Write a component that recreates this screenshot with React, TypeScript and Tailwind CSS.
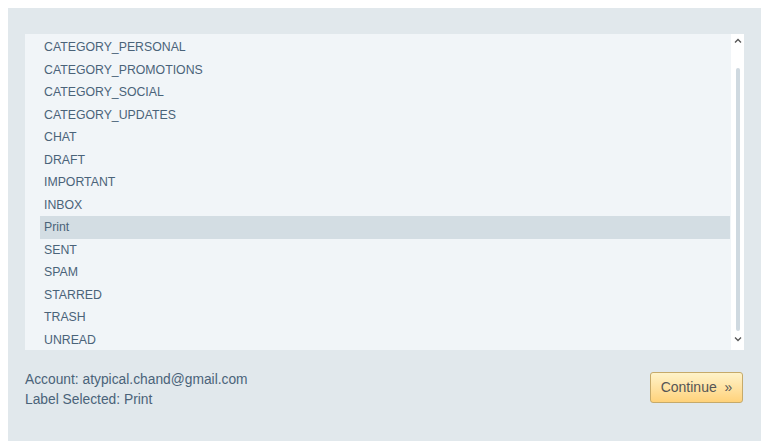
const labels = [
  "CATEGORY_PERSONAL",
  "CATEGORY_PROMOTIONS",
  "CATEGORY_SOCIAL",
  "CATEGORY_UPDATES",
  "CHAT",
  "DRAFT",
  "IMPORTANT",
  "INBOX",
  "Print",
  "SENT",
  "SPAM",
  "STARRED",
  "TRASH",
  "UNREAD",
]

export default function App() {
  const selected = "Print"

  return (
    <div className="h-[447px] w-[768px] bg-white p-2 font-['Liberation_Sans',Arial,sans-serif]">
      <div className="flex h-[433px] w-[753px] flex-col bg-[#e1e8ec] pl-[17px] pr-[17px] pt-[26px]">
        {/* label list */}
        <div className="flex h-[316px] w-[719px] bg-[#f1f5f8]">
          <ul className="flex-1 pl-[15px] pr-[1px] pt-[2px]">
            {labels.map((label) => (
              <li
                key={label}
                className={`flex h-[22.5px] items-center pl-[4px] text-[12.3px] text-[#4a6379] ${
                  label === selected ? "bg-[#d3dde3]" : ""
                }`}
              >
                {label}
              </li>
            ))}
          </ul>
          <div className="flex w-[13px] flex-col items-center bg-white py-[2px]">
            <svg width="8" height="6" viewBox="0 0 8 6" className="mt-[2px]">
              <path d="M1 4.5 L4 1.5 L7 4.5" fill="none" stroke="#555" strokeWidth="1.3" />
            </svg>
            <div className="mt-[24px] h-[263px] w-[4px] rounded-full bg-[#cfd9e0]" />
            <svg width="8" height="6" viewBox="0 0 8 6" className="mt-[5px]">
              <path d="M1 1.5 L4 4.5 L7 1.5" fill="none" stroke="#555" strokeWidth="1.3" />
            </svg>
          </div>
        </div>

        {/* footer */}
        <div className="flex items-start justify-between pt-[20px]">
          <div className="text-[13.8px] leading-[20px] text-[#4a6379]">
            <div>Account: atypical.chand@gmail.com</div>
            <div>Label Selected: Print</div>
          </div>
          <button className="mr-[1px] mt-[2px] h-[31px] w-[93px] rounded-[3px] border border-[#c6aa6a] bg-gradient-to-b from-[#fff3c9] to-[#ffd27a] text-[14px] text-[#555]">
            Continue&nbsp;&nbsp;»
          </button>
        </div>
      </div>
    </div>
  )
}
